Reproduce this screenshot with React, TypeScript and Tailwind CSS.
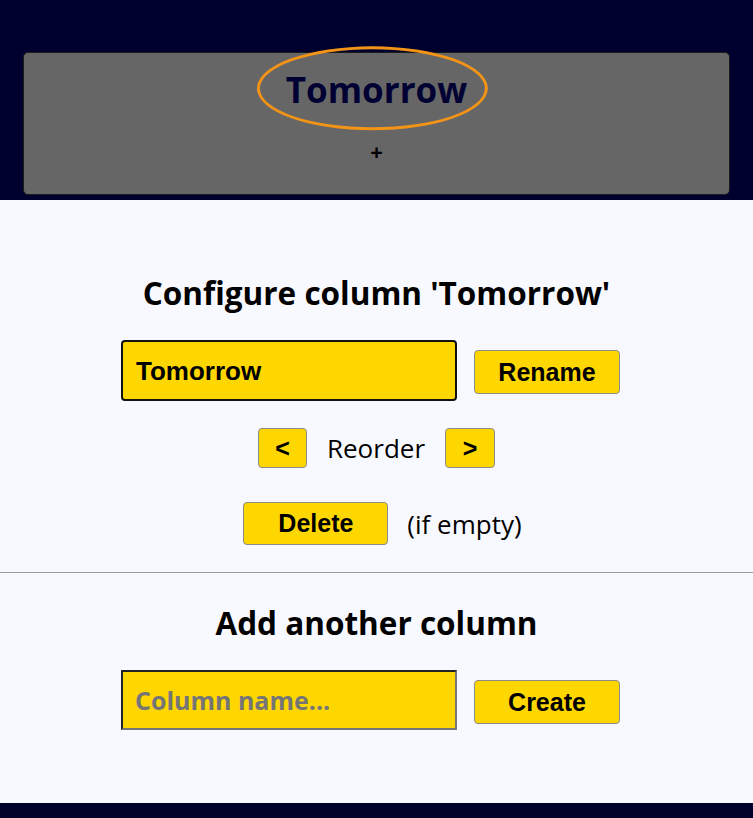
import React from "react";

const btn =
  "bg-[#ffd700] border border-[#8a8a8a] rounded-[4px] text-black font-bold text-[25px] leading-none flex items-center justify-center [font-family:'Liberation_Sans',Arial,sans-serif]";

export default function App() {
  return (
    <div className="w-[753px] h-[818px] flex flex-col bg-[#00002e] [font-family:'Open_Sans',sans-serif] overflow-hidden">
      {/* Top board */}
      <div className="pt-[52px] pb-[5px] px-[23px] bg-[#00002e]">
        <div className="h-[143px] bg-[#666666] border border-[#1c1c1c] rounded-[5px] flex flex-col items-center pt-[13px]">
          <div className="relative">
            <span className="block text-[35px] leading-[48px] font-bold text-[#000033]">Tomorrow</span>
            <div className="absolute left-1/2 top-1/2 -translate-x-[52%] -translate-y-[52%] w-[231px] h-[84px] rounded-[50%] border-[3px] border-[#f39417]" />
          </div>
          <div className="mt-[25px] text-[22px] leading-[24px] font-bold text-black">+</div>
        </div>
      </div>

      {/* Config panel */}
      <div className="flex-1 bg-[#f8f9fe] flex flex-col">
        <div className="flex flex-col items-center pt-[73px]">
          <h2 className="text-[31.5px] leading-[40px] font-bold text-black">Configure column 'Tomorrow'</h2>
          <div className="mt-[27px] flex items-start pr-[12px]">
            <div className="w-[336px] h-[61px] bg-[#ffd700] border-2 border-[#111111] rounded-[4px] flex items-center pl-[13px] pt-[2px] text-[26px] font-bold text-black [font-family:'Liberation_Sans',Arial,sans-serif]">
              Tomorrow
            </div>
            <button className={`${btn} ml-[17px] mt-[10px] w-[146px] h-[44px]`}>Rename</button>
          </div>
          <div className="mt-[27px] flex items-center">
            <button className={`${btn} w-[49px] h-[40px]`}>&lt;</button>
            <span className="mx-[20px] text-[26px] leading-[40px] text-black">Reorder</span>
            <button className={`${btn} w-[50px] h-[40px]`}>&gt;</button>
          </div>
          <div className="mt-[34px] flex items-center pl-[12px]">
            <button className={`${btn} w-[145px] h-[43px]`}>Delete</button>
            <span className="ml-[19px] text-[26px] leading-[40px] text-black">(if empty)</span>
          </div>
        </div>
        <div className="mt-[27px] h-px bg-[#9a9a9a]" />
        <div className="flex flex-col items-center pt-[30px]">
          <h2 className="text-[31.5px] leading-[40px] font-bold text-black">Add another column</h2>
          <div className="mt-[27px] flex items-start pr-[12px]">
            <input
              placeholder="Column name..."
              className="w-[336px] h-[60px] bg-[#ffd700] border-2 border-t-[#222222] border-l-[#222222] border-b-[#767676] border-r-[#767676] pl-[12px] text-[25px] font-bold text-black placeholder:text-[#757575] outline-none"
            />
            <button className={`${btn} ml-[17px] mt-[10px] w-[146px] h-[44px]`}>Create</button>
          </div>
        </div>
      </div>
      <div className="h-[15px] bg-[#00002a]" />
    </div>
  );
}
